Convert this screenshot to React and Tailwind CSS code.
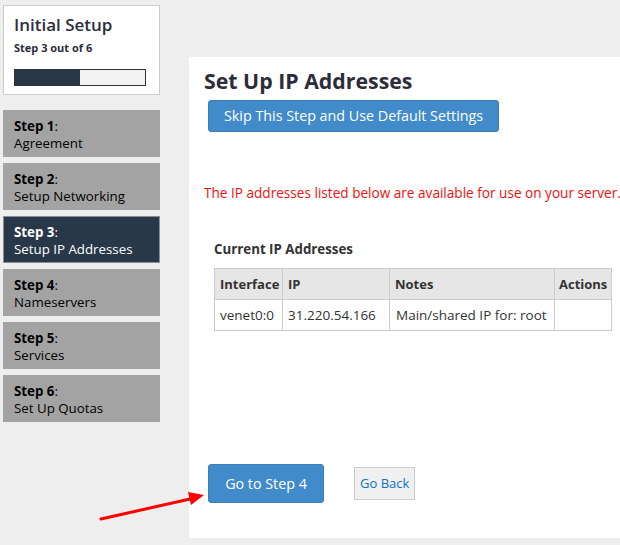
import React from "react";

const steps = [
  { n: 1, label: "Agreement" },
  { n: 2, label: "Setup Networking" },
  { n: 3, label: "Setup IP Addresses", active: true },
  { n: 4, label: "Nameservers" },
  { n: 5, label: "Services" },
  { n: 6, label: "Set Up Quotas" },
];

export default function App() {
  return (
    <div
      className="relative w-[620px] h-[545px] overflow-hidden bg-[#eeeeee] flex items-start text-[#333]"
      style={{ fontFamily: '"Open Sans", "DejaVu Sans", sans-serif' }}
    >
      {/* Sidebar */}
      <div className="ml-[3px] mt-[5px] w-[157px] flex flex-col shrink-0">
        <div className="h-[90px] bg-white border border-[#cccccc] pl-[10px] pt-[8px]">
          <div className="text-[17px] leading-[22px] font-semibold text-[#2d2d3a]">Initial Setup</div>
          <div className="text-[11px] leading-[16px] font-bold text-[#2d2d3a] mt-[4px]">Step 3 out of 6</div>
          <div className="mt-[13px] w-[132px] h-[17px] border border-[#333] bg-[#f3f3f3] flex">
            <div className="w-[65px] h-full bg-[#283849]" />
          </div>
        </div>
        <div className="mt-[15px] flex flex-col gap-[6px]">
          {steps.map((s) => (
            <div
              key={s.n}
              className={
                s.active
                  ? "h-[47px] bg-[#283849] border border-[#8a8f96] text-white pl-[10px] pt-[7px] text-[13.3px] leading-[17px]"
                  : "h-[47px] bg-[#a3a3a3] text-black pl-[11px] pt-[8px] text-[13.3px] leading-[17px]"
              }
            >
              <div>
                <span className="font-bold">Step {s.n}</span>:
              </div>
              <div>{s.label}</div>
            </div>
          ))}
        </div>
      </div>

      {/* Main panel */}
      <div className="ml-[29px] mt-[57px] w-[470px] h-[481px] bg-white shrink-0 pl-[15px] pt-[11px] text-[13px]">
        <h1 className="text-[21.3px] leading-[26px] font-bold text-[#2d2d3a]">Set Up IP Addresses</h1>
        <button className="ml-[4px] mt-[6px] h-[32px] px-[15px] bg-[#428bca] border border-[#3a7fbd] rounded-[3px] text-white text-[14.3px] leading-[20px]">
          Skip This Step and Use Default Settings
        </button>
        <p className="mt-[52px] text-[#ee1111] text-[13.6px] leading-[18px] whitespace-nowrap">
          The IP addresses listed below are available for use on your server.
        </p>
        <div className="ml-[10px] mt-[38px] font-bold text-[13.3px] leading-[18px]">Current IP Addresses</div>
        <table className="ml-[10px] mt-[10px] border-collapse table-fixed text-[13.5px] leading-[18px] w-[398px]">
          <thead>
            <tr className="bg-[#e6e6e6] h-[31px] text-[13px]">
              <th className="border border-[#cccccc] text-left pl-[5px] pr-0 font-bold w-[68px] whitespace-nowrap">Interface</th>
              <th className="border border-[#cccccc] text-left px-[5px] font-bold w-[107px]">IP</th>
              <th className="border border-[#cccccc] text-left px-[5px] font-bold w-[165px]">Notes</th>
              <th className="border border-[#cccccc] text-left pl-[4px] pr-0 font-bold whitespace-nowrap">Actions</th>
            </tr>
          </thead>
          <tbody>
            <tr className="h-[31px]">
              <td className="border border-[#cccccc] pl-[5px] whitespace-nowrap">venet0:0</td>
              <td className="border border-[#cccccc] px-[5px] whitespace-nowrap">31.220.54.166</td>
              <td className="border border-[#cccccc] px-[6px] whitespace-nowrap">Main/shared IP for: root</td>
              <td className="border border-[#cccccc] px-[5px]"></td>
            </tr>
          </tbody>
        </table>
        <div className="ml-[4px] mt-[133px] flex items-center gap-[30px]">
          <button className="h-[39px] w-[116px] bg-[#428bca] border border-[#3a7fbd] rounded-[3px] text-white text-[14.3px]">
            Go to Step 4
          </button>
          <button className="h-[33px] px-[5px] bg-[#f0f0f0] border border-[#cccccc] text-[#0b73c4] text-[13px]">
            Go Back
          </button>
        </div>
      </div>

      {/* Red annotation arrow */}
      <svg className="absolute left-0 top-0" width="620" height="545" viewBox="0 0 620 545">
        <line x1="101" y1="519" x2="190" y2="499" stroke="#ff0000" strokeWidth="3" strokeLinecap="round" />
        <polygon points="204,495 188,492 191,505" fill="#ff0000" />
      </svg>
    </div>
  );
}
